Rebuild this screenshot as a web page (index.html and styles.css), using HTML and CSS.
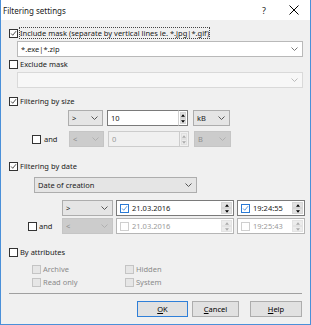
FILE: index.html
```html
<!DOCTYPE html>
<html>
<head>
<meta charset="utf-8">
<link rel="stylesheet" href="styles.css">
</head>
<body>
<div class="window">
  <div class="titlebar">
    <span class="title">Filtering settings</span>
    <span class="tb-help">?</span>
    <span class="tb-close"><svg width="10" height="10" viewBox="0 0 10 10"><path d="M0.5 0.5L9.5 9.5M9.5 0.5L0.5 9.5" stroke="#000" stroke-width="1" fill="none"/></svg></span>
  </div>
  <div class="content">
    <div class="row r-include">
      <span class="cb checked"><svg viewBox="0 0 9 9"><path d="M1.5 4.5L3.5 6.8L7.8 1.5" stroke="#222" stroke-width="1" fill="none"/></svg></span>
      <span class="label focus">Include mask (separate by vertical lines ie. *.jpg|*.gif)</span>
    </div>
    <div class="row r-combo1">
      <div class="combo edit w-mask"><span class="ctext">*.exe|*.zip</span><span class="arrow"><svg viewBox="0 0 7 4"><path d="M0.5 0.5L3.5 3.5L6.5 0.5" stroke="#777" fill="none"/></svg></span></div>
    </div>
    <div class="row r-exclude">
      <span class="cb"></span>
      <span class="label">Exclude mask</span>
    </div>
    <div class="row r-combo2">
      <div class="combo disabled-edit w-mask"><span class="ctext"></span><span class="arrow"><svg viewBox="0 0 7 4"><path d="M0.5 0.5L3.5 3.5L6.5 0.5" stroke="#bbb" fill="none"/></svg></span></div>
    </div>
    <div class="row r-sizecb">
      <span class="cb checked"><svg viewBox="0 0 9 9"><path d="M1.5 4.5L3.5 6.8L7.8 1.5" stroke="#222" stroke-width="1" fill="none"/></svg></span>
      <span class="label">Filtering by size</span>
    </div>
    <div class="row r-size1">
      <div class="combo list w-op1"><span class="ctext">&gt;</span><span class="arrow"><svg viewBox="0 0 7 4"><path d="M0.5 0.5L3.5 3.5L6.5 0.5" stroke="#555" fill="none"/></svg></span></div>
      <div class="spinedit">
        <div class="edit-field"><span class="ctext">10</span></div>
        <div class="spin"><span class="sb"><svg viewBox="0 0 5 3"><path d="M2.5 0L5 3H0Z" fill="#000"/></svg></span><span class="sb"><svg viewBox="0 0 5 3"><path d="M0 0H5L2.5 3Z" fill="#000"/></svg></span></div>
      </div>
      <div class="combo list w-unit"><span class="ctext">kB</span><span class="arrow"><svg viewBox="0 0 7 4"><path d="M0.5 0.5L3.5 3.5L6.5 0.5" stroke="#555" fill="none"/></svg></span></div>
    </div>
    <div class="row r-size2">
      <span class="cb"></span>
      <span class="label and">and</span>
      <div class="combo list disabled w-op1"><span class="ctext">&lt;</span><span class="arrow"><svg viewBox="0 0 7 4"><path d="M0.5 0.5L3.5 3.5L6.5 0.5" stroke="#b0b0b0" fill="none"/></svg></span></div>
      <div class="spinedit disabled">
        <div class="edit-field"><span class="ctext">0</span></div>
        <div class="spin"><span class="sb"><svg viewBox="0 0 5 3"><path d="M2.5 0L5 3H0Z" fill="#aaa"/></svg></span><span class="sb"><svg viewBox="0 0 5 3"><path d="M0 0H5L2.5 3Z" fill="#aaa"/></svg></span></div>
      </div>
      <div class="combo list disabled w-unit"><span class="ctext">B</span><span class="arrow"><svg viewBox="0 0 7 4"><path d="M0.5 0.5L3.5 3.5L6.5 0.5" stroke="#b0b0b0" fill="none"/></svg></span></div>
    </div>
    <div class="row r-datecb">
      <span class="cb checked"><svg viewBox="0 0 9 9"><path d="M1.5 4.5L3.5 6.8L7.8 1.5" stroke="#222" stroke-width="1" fill="none"/></svg></span>
      <span class="label">Filtering by date</span>
    </div>
    <div class="row r-datetype">
      <div class="combo list w-dtype"><span class="ctext">Date of creation</span><span class="arrow"><svg viewBox="0 0 7 4"><path d="M0.5 0.5L3.5 3.5L6.5 0.5" stroke="#555" fill="none"/></svg></span></div>
    </div>
    <div class="row r-date1">
      <div class="combo list w-op2"><span class="ctext">&gt;</span><span class="arrow"><svg viewBox="0 0 7 4"><path d="M0.5 0.5L3.5 3.5L6.5 0.5" stroke="#555" fill="none"/></svg></span></div>
      <div class="picker w-date">
        <span class="pcb"><svg viewBox="0 0 9 9"><path d="M1.5 4.5L3.5 6.8L7.8 1.5" stroke="#2a7ad5" stroke-width="1" fill="none"/></svg></span>
        <span class="ptext">21.03.2016</span>
        <div class="spin"><span class="sb"><svg viewBox="0 0 5 3"><path d="M2.5 0L5 3H0Z" fill="#000"/></svg></span><span class="sb"><svg viewBox="0 0 5 3"><path d="M0 0H5L2.5 3Z" fill="#000"/></svg></span></div>
      </div>
      <div class="picker w-time">
        <span class="pcb"><svg viewBox="0 0 9 9"><path d="M1.5 4.5L3.5 6.8L7.8 1.5" stroke="#2a7ad5" stroke-width="1" fill="none"/></svg></span>
        <span class="ptext">19:24:55</span>
        <div class="spin"><span class="sb"><svg viewBox="0 0 5 3"><path d="M2.5 0L5 3H0Z" fill="#000"/></svg></span><span class="sb"><svg viewBox="0 0 5 3"><path d="M0 0H5L2.5 3Z" fill="#000"/></svg></span></div>
      </div>
    </div>
    <div class="row r-date2">
      <span class="cb"></span>
      <span class="label and2">and</span>
      <div class="combo list disabled w-op2"><span class="ctext">&lt;</span><span class="arrow"><svg viewBox="0 0 7 4"><path d="M0.5 0.5L3.5 3.5L6.5 0.5" stroke="#b0b0b0" fill="none"/></svg></span></div>
      <div class="picker disabled w-date">
        <span class="pcb"></span>
        <span class="ptext">21.03.2016</span>
        <div class="spin"><span class="sb"><svg viewBox="0 0 5 3"><path d="M2.5 0L5 3H0Z" fill="#aaa"/></svg></span><span class="sb"><svg viewBox="0 0 5 3"><path d="M0 0H5L2.5 3Z" fill="#aaa"/></svg></span></div>
      </div>
      <div class="picker disabled w-time">
        <span class="pcb"></span>
        <span class="ptext">19:25:43</span>
        <div class="spin"><span class="sb"><svg viewBox="0 0 5 3"><path d="M2.5 0L5 3H0Z" fill="#aaa"/></svg></span><span class="sb"><svg viewBox="0 0 5 3"><path d="M0 0H5L2.5 3Z" fill="#aaa"/></svg></span></div>
      </div>
    </div>
    <div class="row r-attrcb">
      <span class="cb"></span>
      <span class="label">By attributes</span>
    </div>
    <div class="attrs">
      <div class="attr"><span class="cb dis"></span><span class="label grey">Archive</span></div>
      <div class="attr"><span class="cb dis"></span><span class="label grey">Hidden</span></div>
      <div class="attr"><span class="cb dis"></span><span class="label grey">Read only</span></div>
      <div class="attr"><span class="cb dis"></span><span class="label grey">System</span></div>
    </div>
    <div class="separator"></div>
    <div class="buttons">
      <button class="btn default w-ok"><u>O</u>K</button>
      <button class="btn w-cancel"><u>C</u>ancel</button>
      <button class="btn w-help"><u>H</u>elp</button>
    </div>
  </div>
</div>
</body>
</html>
```
FILE: styles.css
```css
* { box-sizing: border-box; }
html, body { margin: 0; padding: 0; }
body {
  width: 311px;
  height: 325px;
  overflow: hidden;
  font-family: "Noto Sans", "Open Sans", sans-serif;
  font-size: 7.5px;
  color: #1a1a1a;
}
.window {
  width: 311px;
  height: 325px;
  background: #f0f0f0;
  border: 1px solid #4a90d9;
  border-top: none;
}
.titlebar {
  height: 20px;
  background: #fff;
  display: flex;
  align-items: center;
  padding-left: 2px;
}
.title { font-size: 8px; flex: 1; }
.tb-help { font-size: 9px; margin-right: 23px; color: #222; }
.tb-close { width: 10px; height: 10px; margin-right: 11px; display: flex; }
.content { display: flex; flex-direction: column; }
.row { display: flex; align-items: center; }
.cb {
  width: 9px; height: 9px;
  border: 1px solid #333;
  background: #fff;
  flex: none;
  display: flex;
}
.cb svg { width: 100%; height: 100%; }
.cb.dis { border-color: #c4c4c4; background: #e6e6e6; }
.label { margin-left: 2px; white-space: nowrap; line-height: 12px; }
.label.focus { outline: 1px dotted #444; outline-offset: -1px; padding: 0 1px; margin-left: 1px; }
.label.grey { color: #8a8a8a; }

.r-include { margin-top: 7px; height: 12px; padding-left: 8px; }
.r-combo1 { margin-top: 2px; height: 16px; padding-left: 16px; }
.r-exclude { margin-top: 1px; height: 12px; padding-left: 8px; }
.r-combo2 { margin-top: 2px; height: 16px; padding-left: 16px; }
.r-sizecb { margin-top: 7px; height: 12px; padding-left: 8px; }
.r-size1 { margin-top: 3px; height: 16px; padding-left: 67px; }
.r-size2 { margin-top: 5px; height: 16px; padding-left: 31px; }
.r-datecb { margin-top: 13px; height: 12px; padding-left: 8px; }
.r-datetype { margin-top: 5px; height: 16px; padding-left: 33px; }
.r-date1 { margin-top: 7px; height: 16px; padding-left: 61px; }
.r-date2 { margin-top: 2px; height: 16px; padding-left: 27px; }
.r-attrcb { margin-top: 12px; height: 12px; padding-left: 8px; }

.and { margin-left: 3px; width: 25px; }
.and2 { margin-left: 2px; width: 23px; }

.combo {
  height: 16px;
  display: flex;
  align-items: center;
  border: 1px solid #adadad;
  background: #e5e5e5;
  padding-left: 3px;
}
.combo .ctext { flex: 1; white-space: nowrap; overflow: hidden; }
.combo .arrow { width: 7px; height: 4px; margin-right: 4px; display: flex; }
.combo .arrow svg { width: 7px; height: 4px; }
.combo.edit { background: #fff; border-color: #b9b9b9; }
.combo.disabled-edit { background: #f7f7f7; border-color: #d9d9d9; }
.combo.disabled { background: #cccccc; border-color: #c5c5c5; color: #8d8d8d; }
.w-mask { width: 286px; }
.w-op1 { width: 35px; }
.w-unit { width: 37px; margin-left: 5px; }
.w-dtype { width: 163px; }
.w-op2 { width: 51px; }

.spinedit { display: flex; margin-left: 4px; height: 16px; }
.edit-field {
  width: 71px; height: 16px;
  border: 1px solid #7a7a7a;
  border-right: none;
  background: #fff;
  display: flex; align-items: center;
  padding-left: 3px;
}
.spin { width: 10px; display: flex; flex-direction: column; height: 100%; }
.spinedit .spin { border: 1px solid #7a7a7a; border-left: 1px solid #d0d0d0; background: #fff; padding: 1px; gap: 0; }
.sb {
  flex: 1;
  background: #e1e1e1;
  display: flex; align-items: center; justify-content: center;
  border: 1px solid #d6d6d6;
}
.sb svg { width: 4px; height: 3px; }
.spinedit.disabled .edit-field { background: #f0f0f0; border-color: #cccccc; color: #9a9a9a; }
.spinedit.disabled .spin { border-color: #cccccc; background: #f0f0f0; }
.spinedit.disabled .sb { background: #ececec; border-color: #e0e0e0; }

.picker {
  height: 16px;
  border: 1px solid #7a7a7a;
  background: #fff;
  display: flex;
  align-items: center;
  padding-left: 3px;
  margin-left: 3px;
}
.picker .pcb {
  width: 9px; height: 9px;
  border: 1px solid #2a7ad5;
  background: #fff;
  display: flex;
  flex: none;
}
.picker .pcb svg { width: 100%; height: 100%; }
.picker .ptext { margin-left: 3px; flex: 1; white-space: nowrap; }
.picker .spin { width: 12px; padding: 1px 1px 1px 0; }
.w-date { width: 118px; }
.w-time { width: 68px; }
.picker.disabled { border-color: #b5b5b5; color: #9a9a9a; }
.picker.disabled .pcb { border-color: #cfcfcf; }
.picker.disabled .sb { background: #ececec; border-color: #e3e3e3; }

.attrs {
  margin-top: 5px;
  display: grid;
  grid-template-columns: 93px auto;
  grid-auto-rows: 12px;
  row-gap: 1px;
  padding-left: 31px;
}
.attr { display: flex; align-items: center; }

.separator { margin: 5px 8px 0 8px; height: 1px; background: #a0a0a0; }
.buttons { display: flex; margin-top: 7px; padding-left: 136px; }
.btn {
  height: 16px;
  border: 1px solid #adadad;
  background: #e1e1e1;
  font-family: inherit;
  font-size: 7.5px;
  padding: 0;
  margin: 0;
  color: #000;
}
.btn.default { border-color: #2f7fd8; }
.w-ok { width: 51px; }
.w-cancel { width: 47px; margin-left: 4px; }
.w-help { width: 52px; margin-left: 11px; }
```
